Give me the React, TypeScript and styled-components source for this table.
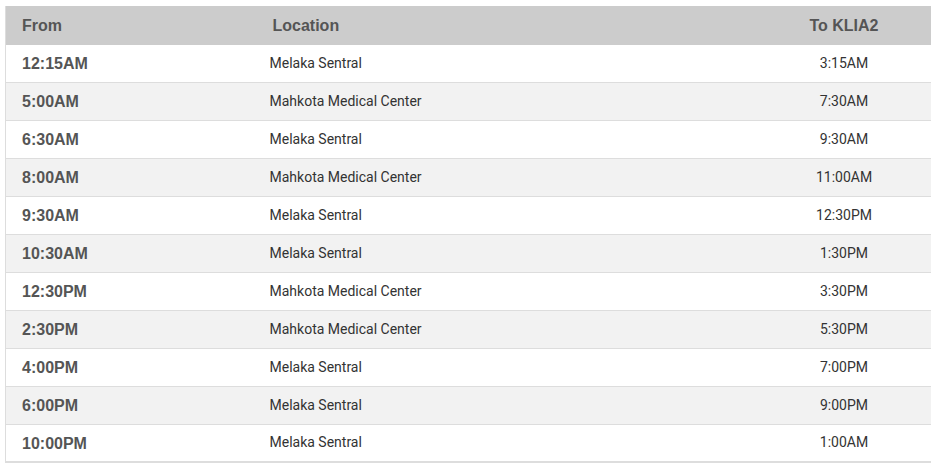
import styled, { createGlobalStyle } from 'styled-components';

const GlobalStyle = createGlobalStyle`
  html, body {
    margin: 0;
    padding: 0;
    background: #fff;
  }
`;

const Wrap = styled.div`
  padding: 6px 0 0 5px;
`;

const Table = styled.table`
  width: 926px;
  border-collapse: collapse;
  border-left: 1px solid #dddddd;
  border-bottom: 2px solid #dddddd;
  table-layout: fixed;
`;

const HeadRow = styled.tr`
  background: #cccccc;
  height: 39px;
`;

const HeadCell = styled.th<{ $align?: string; $pad?: number }>`
  padding: 0 0 0 ${p => p.$pad ?? 16}px;
  text-align: ${p => p.$align ?? 'left'};
  font-family: 'Liberation Sans', Arial, sans-serif;
  font-size: 16px;
  font-weight: bold;
  color: #555555;
  vertical-align: middle;
`;

const Row = styled.tr<{ $striped: boolean }>`
  height: 38px;
  background: ${p => (p.$striped ? '#f2f2f2' : '#ffffff')};
  border-top: 1px solid #dddddd;

  &:first-child {
    border-top: none;
    height: 37px;
  }
`;

const TimeCell = styled.td`
  padding: 2px 0 0 16px;
  font-family: 'Liberation Sans', Arial, sans-serif;
  font-size: 16px;
  font-weight: bold;
  color: #555555;
  vertical-align: middle;
`;

const PlaceCell = styled.td`
  padding: 0 0 1px 15px;
  font-family: Roboto, 'Liberation Sans', sans-serif;
  font-size: 14px;
  color: #333333;
  vertical-align: middle;
`;

const ArrivalCell = styled.td`
  padding: 0 0 1px 0;
  text-align: center;
  font-family: Roboto, 'Liberation Sans', sans-serif;
  font-size: 14px;
  color: #333333;
  vertical-align: middle;
`;

const trips = [
  ['12:15AM', 'Melaka Sentral', '3:15AM'],
  ['5:00AM', 'Mahkota Medical Center', '7:30AM'],
  ['6:30AM', 'Melaka Sentral', '9:30AM'],
  ['8:00AM', 'Mahkota Medical Center', '11:00AM'],
  ['9:30AM', 'Melaka Sentral', '12:30PM'],
  ['10:30AM', 'Melaka Sentral', '1:30PM'],
  ['12:30PM', 'Mahkota Medical Center', '3:30PM'],
  ['2:30PM', 'Mahkota Medical Center', '5:30PM'],
  ['4:00PM', 'Melaka Sentral', '7:00PM'],
  ['6:00PM', 'Melaka Sentral', '9:00PM'],
  ['10:00PM', 'Melaka Sentral', '1:00AM'],
];

export default function App() {
  return (
    <Wrap>
      <GlobalStyle />
      <Table>
        <colgroup>
          <col style={{ width: 249 }} />
          <col style={{ width: 502 }} />
          <col style={{ width: 175 }} />
        </colgroup>
        <thead>
          <HeadRow>
            <HeadCell>From</HeadCell>
            <HeadCell $pad={18}>Location</HeadCell>
            <HeadCell $align="center" $pad={0}>To KLIA2</HeadCell>
          </HeadRow>
        </thead>
        <tbody>
          {trips.map(([from, place, to], i) => (
            <Row key={from} $striped={i % 2 === 1}>
              <TimeCell>{from}</TimeCell>
              <PlaceCell>{place}</PlaceCell>
              <ArrivalCell>{to}</ArrivalCell>
            </Row>
          ))}
        </tbody>
      </Table>
    </Wrap>
  );
}
